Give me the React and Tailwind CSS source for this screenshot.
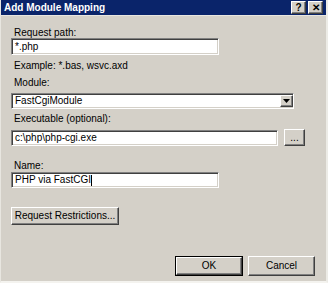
import React from "react";

const sunken = "bg-white border border-t-[#808080] border-l-[#808080] border-b-white border-r-white shadow-[inset_1px_1px_0_#404040,inset_-1px_-1px_0_#d4d0c8]";
const raised = "bg-[#d4d0c8] border border-t-white border-l-white border-b-[#404040] border-r-[#404040] shadow-[inset_-1px_-1px_0_#808080]";

export default function App() {
  return (
    <div className="w-[328px] h-[283px] bg-[#d4d0c8] flex flex-col text-[10px] text-black border-l border-l-[#e8e6e0] border-b-2 border-b-[#f4f3ef] border-r-2 border-r-[#ecebe6] overflow-hidden whitespace-nowrap" style={{ fontFamily: '"Liberation Sans", Arial, sans-serif' }}>
      <div className="h-[16px] bg-[#0a246a] flex items-center pl-[3px] pr-[3px] shrink-0 border-b border-b-[#e8e6e0]">
        <span className="text-white font-bold text-[10px] leading-none flex-1">Add Module Mapping</span>
        <div className="flex gap-[2px]">
          <div className={`${raised} w-[15px] h-[13px] flex items-center justify-center text-[10px] font-bold leading-none`}>?</div>
          <div className={`${raised} w-[15px] h-[13px] flex items-center justify-center text-[10px] font-bold leading-none`}>✕</div>
        </div>
      </div>
      <div className="flex flex-col px-[10px]">
        <div className="mt-[10px] pl-[3px] leading-[13px]">Request path:</div>
        <div className={`${sunken} mt-[-1px] w-[208px] h-[17px] flex items-center pl-[3px] leading-none`}>*.php</div>
        <div className="mt-[4px] pl-[3px] leading-[13px]">Example: *.bas, wsvc.axd</div>
        <div className="mt-[4px] pl-[3px] leading-[13px]">Module:</div>
        <div className={`${sunken} mt-[4px] w-[283px] h-[16px] flex items-center pl-[3px] leading-none`}>
          <span className="flex-1">FastCgiModule</span>
          <div className={`${raised} w-[13px] h-[12px] flex items-center justify-center`}>
            <svg width="7" height="4" viewBox="0 0 7 4"><path d="M0 0h7L3.5 4z" fill="#000" /></svg>
          </div>
        </div>
        <div className="mt-[3px] pl-[3px] leading-[13px]">Executable (optional):</div>
        <div className="mt-[4px] flex items-center gap-[6px]">
          <div className={`${sunken} w-[267px] h-[16px] flex items-center pl-[3px] leading-none`}>c:\php\php-cgi.exe</div>
          <div className={`${raised} w-[21px] h-[17px] flex items-center justify-center leading-none`}>...</div>
        </div>
        <div className="mt-[13px] pl-[3px] leading-[13px]">Name:</div>
        <div className={`${sunken} w-[208px] h-[16px] flex items-center pl-[3px] leading-none`}>PHP via FastCGI<span className="w-px h-[11px] bg-black"></span></div>
        <div className={`${raised} mt-[19px] w-[108px] h-[18px] flex items-center justify-center leading-none`}>Request Restrictions...</div>
        <div className="mt-[31px] flex justify-end gap-[5px] pr-[1px]">
          <div className="border border-black w-[68px] h-[20px]">
            <div className={`${raised} w-full h-full flex items-center justify-center leading-none`}>OK</div>
          </div>
          <div className={`${raised} w-[67px] h-[20px] flex items-center justify-center leading-none`}>Cancel</div>
        </div>
      </div>
    </div>
  );
}
